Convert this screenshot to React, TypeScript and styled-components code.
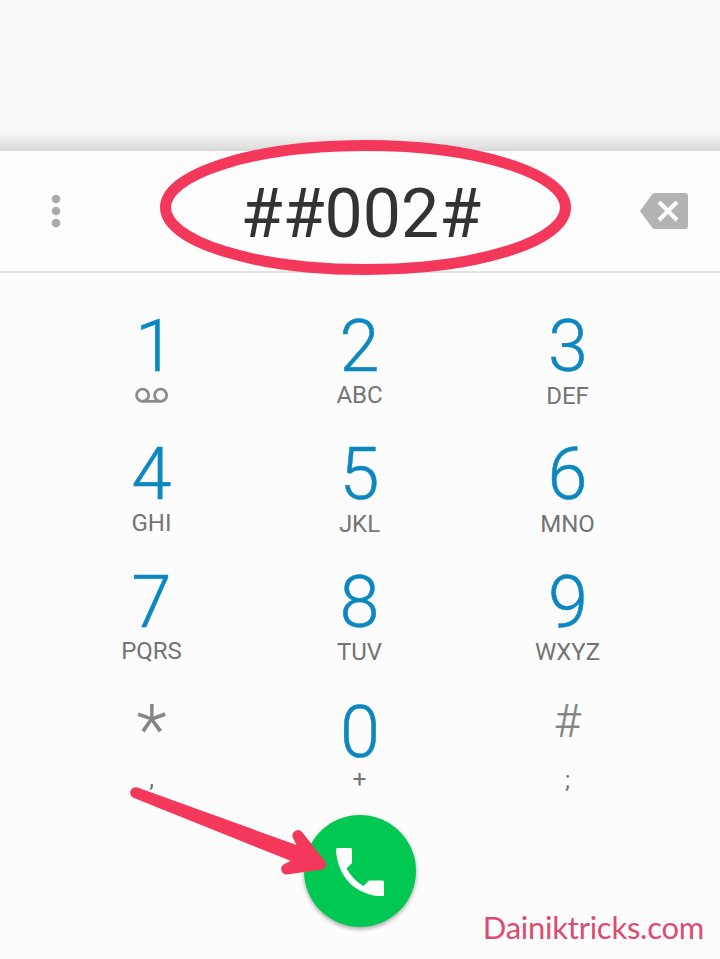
import React from "react";
import styled, { createGlobalStyle } from "styled-components";

const GlobalStyle = createGlobalStyle`
  body { margin: 0; background: #fcfcfc; }
  * { box-sizing: border-box; }
`;

const PINK = "#f4385c";

const Screen = styled.main`
  position: relative;
  display: flex;
  flex-direction: column;
  width: 720px;
  height: 959px;
  overflow: hidden;
  background: #fcfcfc;
  font-family: Roboto, sans-serif;
`;

const Backdrop = styled.div`
  height: 151px;
  flex: none;
  background: linear-gradient(#fafafa 0, #fafafa 126px, #f6f6f6 133px, #ebebeb 140px, #dadada 151px);
`;

const NumberBar = styled.header`
  display: grid;
  grid-template-columns: 112px 1fr 112px;
  align-items: center;
  height: 122px;
  flex: none;
  border-bottom: 2px solid #e1e1e1;
  background: #fdfdfd;
`;

const IconButton = styled.button`
  display: flex;
  justify-content: center;
  align-items: center;
  height: 120px;
  padding: 0;
  border: 0;
  background: none;
`;

const Dialed = styled.output`
  padding: 6px 0 0 2px;
  text-align: center;
  font-size: 68px;
  line-height: 80px;
  color: #333;
`;

const Keypad = styled.section`
  display: grid;
  grid-template-columns: repeat(3, 208px);
  grid-template-rows: repeat(4, 128px);
  padding: 38px 0 0 47.5px;
  height: 542px;
  flex: none;
`;

const Key = styled.button`
  display: flex;
  flex-direction: column;
  align-items: center;
  padding: 0;
  border: 0;
  background: none;
  font-family: inherit;
`;

const Digit = styled.span<{ $size?: number; $muted?: boolean; $drop?: number; $indent?: number }>`
  height: 70px;
  margin-top: ${(p) => p.$drop ?? 1}px;
  margin-bottom: ${(p) => -(p.$drop ?? 1)}px;
  padding-left: ${(p) => p.$indent ?? 0}px;
  font-size: ${(p) => p.$size ?? 72}px;
  font-weight: 300;
  line-height: 70px;
  color: ${(p) => (p.$muted ? "#858585" : "#0d87c0")};
  -webkit-text-stroke: ${(p) => (p.$muted ? 0.2 : 0.5)}px currentColor;
`;

const Letters = styled.span<{ $drop?: number }>`
  display: flex;
  justify-content: center;
  height: 28px;
  padding-top: ${(p) => p.$drop ?? 0}px;
  font-size: 24px;
  line-height: 28px;
  color: #747474;
`;

const Footer = styled.footer`
  display: grid;
  grid-template-columns: 1fr 112px 1fr;
  flex: 1;
`;

const CallButton = styled.button`
  grid-column: 2;
  display: flex;
  align-items: center;
  justify-content: center;
  width: 112px;
  height: 112px;
  padding-top: 2px;
  padding-left: 0;
  padding-right: 0;
  border: 0;
  border-radius: 50%;
  background: #00c853;
  box-shadow: 0 2px 4px rgba(0, 0, 0, 0.35);
`;

const Credit = styled.span`
  align-self: end;
  justify-self: end;
  margin: 0 16px 12px 0;
  font: 400 31px/40px Lato, sans-serif;
  letter-spacing: -0.25px;
  color: #df4a70;
`;

const Annotations = styled.svg`
  position: absolute;
  inset: 0;
  pointer-events: none;
`;

const Voicemail = () => (
  <svg width="36" height="28" viewBox="0 0 36 28" fill="none" stroke="#8c8c8c" strokeWidth="2.8">
    <circle cx="8.600" cy="14.200" r="6.100" />
    <circle cx="26.600" cy="14.200" r="6.100" />
    <path d="M8.600 20.300H26.600" />
  </svg>
);

type KeySpec = {
  digit: string;
  letters: React.ReactNode;
  size?: number;
  muted?: boolean;
  drop?: number;
  indent?: number;
  lettersDrop?: number;
};

const keys: KeySpec[] = [
  { digit: "1", letters: <Voicemail />, indent: 7 },
  { digit: "2", letters: "ABC" },
  { digit: "3", letters: "DEF", lettersDrop: 1, indent: 1 },
  { digit: "4", letters: "GHI" },
  { digit: "5", letters: "JKL", lettersDrop: 1 },
  { digit: "6", letters: "MNO", lettersDrop: 1 },
  { digit: "7", letters: "PQRS" },
  { digit: "8", letters: "TUV", lettersDrop: 1 },
  { digit: "9", letters: "WXYZ", lettersDrop: 1, indent: 1 },
  { digit: "*", letters: ",", size: 70, muted: true, drop: 0 },
  { digit: "0", letters: "+", drop: 3, indent: 1 },
  { digit: "#", letters: ";", size: 46, muted: true, drop: -9, lettersDrop: 1 },
];

export default function App() {
  return (
    <>
      <GlobalStyle />
      <Screen>
        <Backdrop />
        <NumberBar>
          <IconButton aria-label="More options">
            <svg width="10" height="34" viewBox="0 0 10 34" fill="#a9a9a9">
              <circle cx="5" cy="5" r="4.3" />
              <circle cx="5" cy="17" r="4.3" />
              <circle cx="5" cy="29" r="4.3" />
            </svg>
          </IconButton>
          <Dialed>##002#</Dialed>
          <IconButton aria-label="Delete">
            <svg width="48" height="36" viewBox="0 0 48 36">
              <path d="M15 0H45Q48 0 48 3V33Q48 36 45 36H15Q13 36 12 34.500L0 18L12 1.500Q13 0 15 0Z" fill="#b3b3b3" />
              <path d="M19 9L37 27M37 9L19 27" stroke="#fff" strokeWidth="4" />
            </svg>
          </IconButton>
        </NumberBar>
        <Keypad>
          {keys.map((k) => (
            <Key key={k.digit}>
              <Digit $size={k.size} $muted={k.muted} $drop={k.drop} $indent={k.indent}>{k.digit}</Digit>
              <Letters $drop={k.lettersDrop}>{k.letters}</Letters>
            </Key>
          ))}
        </Keypad>
        <Footer>
          <CallButton aria-label="Call">
            <svg width="48" height="48" viewBox="0 0 48 48" fill="#fff">
              <path d="M1.500 0H14.500Q16 0 16 1.500V15L10.500 20.500Q17 32 27.500 38L33 32.500H46.500Q48 32.500 48 34V46.500Q48 48.500 46 48.500C19 47 1.500 28.500 0 2Q0 0 1.500 0Z" />
            </svg>
          </CallButton>
          <Credit>Dainiktricks.com</Credit>
        </Footer>
        <Annotations width="720" height="959" viewBox="0 0 720 959">
          <ellipse cx="365.500" cy="207.500" rx="200" ry="62" fill="none" stroke={PINK} strokeWidth="11" />
          <path
            d="M137.500 787.500L296.500 845L292.800 837.500A5.500 5.500 0 0 1 302.500 832.500L325.500 862Q327.500 867.500 322.500 869.500L286.500 874.500A5.500 5.500 0 0 1 283.500 864.500L290.500 860.800L134 798A5.500 5.500 0 0 1 137.500 787.500Z"
            fill={PINK}
          />
        </Annotations>
      </Screen>
    </>
  );
}
